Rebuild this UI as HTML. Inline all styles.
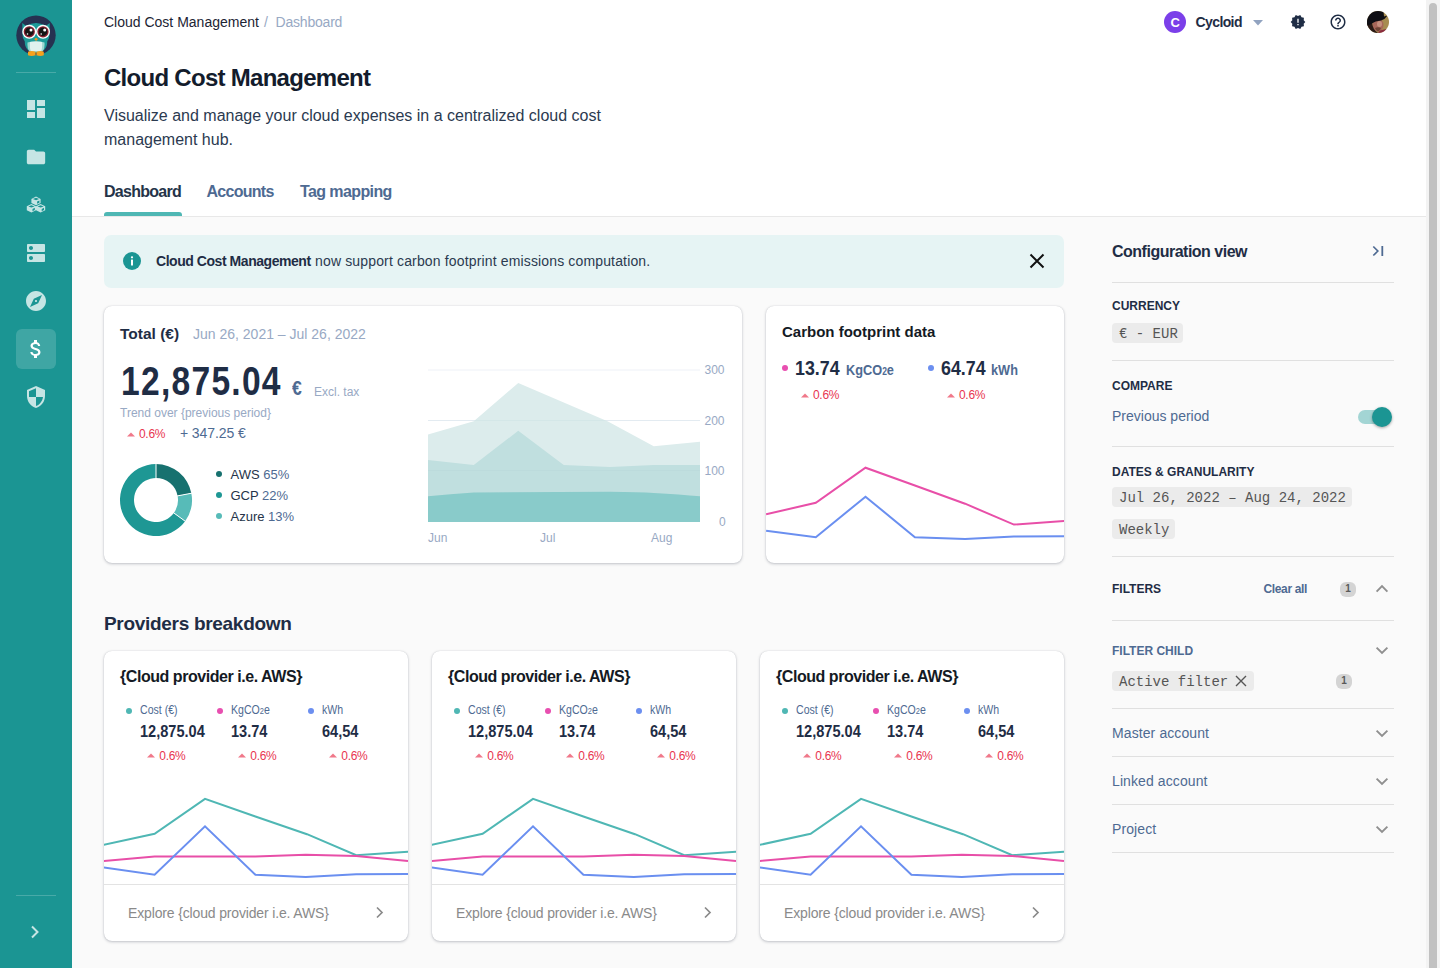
<!DOCTYPE html>
<html><head><meta charset="utf-8">
<style>
*{box-sizing:border-box;margin:0;padding:0}
html,body{width:1440px;height:968px;overflow:hidden;font-family:"Liberation Sans",sans-serif;background:#fafafa;color:#1f2d45}
.a{position:absolute}
.t{position:absolute;white-space:nowrap;line-height:1}
.card{position:absolute;background:#fff;border-radius:8px;box-shadow:0 1px 3px rgba(30,40,60,.25),0 0 1px rgba(30,40,60,.2)}
</style></head><body>
<div class="a" style="left:0px;top:0px;width:72px;height:968px;background:#1b9593"></div><svg class="a" style="left:16px;top:15px;" width="40" height="42" viewBox="0 0 40 42">
<circle cx="20" cy="20.3" r="19.7" fill="#263251"/>
<path d="M6.3 8 L10 10.8 Q20 5 30 10.8 L33.7 8 L33.6 19 Q33.5 24 31.2 26.5 Q31.5 36.5 20 38 Q8.5 36.5 8.8 26.5 Q6.5 24 6.4 19 Z" fill="#1d9c99"/>
<circle cx="13.3" cy="16.8" r="7" fill="#fff"/><circle cx="27" cy="16.8" r="7" fill="#fff"/>
<circle cx="13.3" cy="16.8" r="5.6" fill="#8a2130"/><circle cx="27" cy="16.8" r="5.6" fill="#8a2130"/>
<circle cx="13.3" cy="16.8" r="4.3" fill="#151515"/><circle cx="27" cy="16.8" r="4.3" fill="#151515"/>
<circle cx="15" cy="15" r="1.5" fill="#fff"/><circle cx="28.7" cy="15" r="1.5" fill="#fff"/>
<circle cx="11.5" cy="19" r="0.8" fill="#fff"/><circle cx="25.2" cy="19" r="0.8" fill="#fff"/>
<circle cx="20.1" cy="24.3" r="1.4" fill="#f7931e"/>
<path d="M11.5 27.5 Q20 25 28.5 27.5 Q29 33.5 26.5 36.5 L13.5 36.5 Q11 33.5 11.5 27.5Z" fill="#9fd8d2"/>
<path d="M14 27 Q20 25.8 26 27 Q26.5 33.5 25 36.5 L15 36.5 Q13.5 33.5 14 27Z" fill="#dff2ef"/>
<path d="M12 36.8 Q15.5 35 19.6 36.8 L19.6 40.3 Q15.5 41.5 12 40.3Z M20.4 36.8 Q24.5 35 27.8 36.8 L27.8 40.3 Q24.5 41.5 20.4 40.3Z" fill="#f7a11e"/>
</svg><div class="a" style="left:16px;top:72px;width:40px;height:1px;background:rgba(255,255,255,.2)"></div><svg class="a" style="left:24px;top:97px;" width="24" height="24" viewBox="0 0 24 24"><path fill="#c6e5e4" d="M3 13h8V3H3v10zm0 8h8v-6H3v6zm10 0h8V11h-8v10zm0-18v6h8V3h-8z"/></svg><svg class="a" style="left:25px;top:146px;" width="22" height="22" viewBox="0 0 24 24"><path fill="#c6e5e4" d="M10 4H4c-1.1 0-1.99.9-1.99 2L2 18c0 1.1.9 2 2 2h16c1.1 0 2-.9 2-2V8c0-1.1-.9-2-2-2h-8l-2-2z"/></svg><svg class="a" style="left:26px;top:196px;" width="20" height="17" viewBox="0 0 20 17"><path d="M10 0.6 L14.6 2.9 L14.6 6.8999999999999995 L10 9.2 L5.4 6.8999999999999995 L5.4 2.9Z" fill="#c6e5e4"/><path d="M10 1.7999999999999998 L13.1 3.0 L10 4.2 L6.9 3.0Z" fill="#1b9593"/><path d="M11.1 5.5 L13.4 4.3999999999999995 L13.4 6.699999999999999 L11.1 7.8Z" fill="#1b9593"/><path d="M5.4 8.0 L10.0 10.3 L10.0 14.3 L5.4 16.6 L0.8000000000000007 14.3 L0.8000000000000007 10.3Z" fill="#c6e5e4"/><path d="M5.4 9.2 L8.5 10.4 L5.4 11.6 L2.3000000000000003 10.4Z" fill="#1b9593"/><path d="M6.5 12.9 L8.8 11.8 L8.8 14.1 L6.5 15.2Z" fill="#1b9593"/><path d="M14.6 8.0 L19.2 10.3 L19.2 14.3 L14.6 16.6 L10.0 14.3 L10.0 10.3Z" fill="#c6e5e4"/><path d="M14.6 9.2 L17.7 10.4 L14.6 11.6 L11.5 10.4Z" fill="#1b9593"/><path d="M15.7 12.9 L18.0 11.8 L18.0 14.1 L15.7 15.2Z" fill="#1b9593"/></svg><svg class="a" style="left:24px;top:241px;" width="24" height="24" viewBox="0 0 24 24"><path fill="#c6e5e4" d="M20 13H4c-.55 0-1 .45-1 1v6c0 .55.45 1 1 1h16c.55 0 1-.45 1-1v-6c0-.55-.45-1-1-1zM7 19c-1.1 0-2-.9-2-2s.9-2 2-2 2 .9 2 2-.9 2-2 2zM20 3H4c-.55 0-1 .45-1 1v6c0 .55.45 1 1 1h16c.55 0 1-.45 1-1V4c0-.55-.45-1-1-1zM7 9c-1.1 0-2-.9-2-2s.9-2 2-2 2 .9 2 2-.9 2-2 2z"/></svg><svg class="a" style="left:24px;top:289px;" width="24" height="24" viewBox="0 0 24 24"><path fill="#c6e5e4" d="M12 10.9c-.61 0-1.1.49-1.1 1.1s.49 1.1 1.1 1.1c.61 0 1.1-.49 1.1-1.1s-.49-1.1-1.1-1.1zM12 2C6.48 2 2 6.48 2 12s4.48 10 10 10 10-4.48 10-10S17.52 2 12 2zm2.19 12.19L6 18l3.81-8.19L18 6l-3.81 8.19z"/></svg><div class="a" style="left:16px;top:329px;width:40px;height:40px;background:rgba(255,255,255,.16);border-radius:6px"></div><svg class="a" style="left:23.5px;top:337px;" width="24" height="24" viewBox="0 0 24 24"><path fill="#fff" d="M11.8 10.9c-2.27-.59-3-1.2-3-2.15 0-1.09 1.01-1.85 2.7-1.85 1.78 0 2.44.85 2.5 2.1h2.21c-.07-1.72-1.12-3.3-3.21-3.81V3h-3v2.16c-1.94.42-3.5 1.68-3.5 3.61 0 2.31 1.91 3.46 4.7 4.13 2.5.6 3 1.48 3 2.41 0 .69-.49 1.79-2.7 1.79-2.06 0-2.87-.92-2.98-2.1h-2.2c.12 2.19 1.76 3.42 3.68 3.83V21h3v-2.15c1.95-.37 3.5-1.5 3.5-3.55 0-2.84-2.43-3.81-4.7-4.4z"/></svg><svg class="a" style="left:24px;top:385px;" width="24" height="24" viewBox="0 0 24 24"><path fill="#c6e5e4" d="M12 1L3 5v6c0 5.55 3.84 10.74 9 12 5.16-1.26 9-6.45 9-12V5l-9-4zm0 10.99h7c-.53 4.12-3.28 7.79-7 8.94V12H5V6.3l7-3.11v8.8z"/></svg><div class="a" style="left:16px;top:895px;width:40px;height:1px;background:rgba(255,255,255,.2)"></div><svg class="a" style="left:29px;top:925px;" width="14" height="14" viewBox="0 0 14 14"><path d="M3 1.5 L8.5 7 L3 12.5" fill="none" stroke="#c6e5e4" stroke-width="2"/></svg><div class="a" style="left:72px;top:0px;width:1354px;height:216px;background:#fff"></div><div class="a" style="left:72px;top:216px;width:1354px;height:1px;background:#e8e8e8"></div><div class="t" style="left:104px;top:15.00px;font-size:14px;font-weight:normal;color:#1c2434;font-family:'Liberation Sans';">Cloud Cost Management</div><div class="t" style="left:264px;top:15.00px;font-size:14px;font-weight:normal;color:#98a9c4;font-family:'Liberation Sans';">/</div><div class="t" style="left:275.5px;top:15.00px;font-size:14px;font-weight:normal;color:#98a9c4;letter-spacing:-0.2px;font-family:'Liberation Sans';">Dashboard</div><div class="t" style="left:104px;top:66.00px;font-size:24px;font-weight:bold;color:#131c2c;letter-spacing:-0.72px;font-family:'Liberation Sans';">Cloud Cost Management</div><div class="t" style="left:104px;top:108.00px;font-size:16px;font-weight:normal;color:#2b3a50;font-family:'Liberation Sans';">Visualize and manage your cloud expenses in a centralized cloud cost</div><div class="t" style="left:104px;top:132.00px;font-size:16px;font-weight:normal;color:#2b3a50;font-family:'Liberation Sans';">management hub.</div><div class="t" style="left:104px;top:184.00px;font-size:16px;font-weight:bold;color:#253449;letter-spacing:-0.72px;font-family:'Liberation Sans';">Dashboard</div><div class="t" style="left:206.5px;top:184.00px;font-size:16px;font-weight:bold;color:#4e6a92;letter-spacing:-0.72px;font-family:'Liberation Sans';">Accounts</div><div class="t" style="left:300px;top:184.00px;font-size:16px;font-weight:bold;color:#4e6a92;letter-spacing:-0.6px;font-family:'Liberation Sans';">Tag mapping</div><div class="a" style="left:104px;top:212px;width:78px;height:4px;background:#4fb7b4;border-radius:3px 3px 0 0"></div><div class="a" style="left:1164px;top:11px;width:22px;height:22px;background:#7b3fe9;border-radius:50%"></div><div class="t" style="left:1170.5px;top:16.00px;font-size:13px;font-weight:bold;color:#fff;font-family:'Liberation Sans';">C</div><div class="t" style="left:1195.5px;top:15.00px;font-size:14px;font-weight:bold;color:#1f2d45;letter-spacing:-0.6px;font-family:'Liberation Sans';">Cycloid</div><svg class="a" style="left:1253px;top:19.5px;" width="10" height="6" viewBox="0 0 10 6"><path d="M0 0 H10 L5 5.5Z" fill="#91a3c0"/></svg><svg class="a" style="left:1290px;top:14px;" width="16" height="16" viewBox="0 0 24 24"><path fill="#1f2d45" d="M23 12l-2.44-2.78.34-3.68-3.61-.82-1.89-3.18L12 3 8.6 1.54 6.71 4.72l-3.61.81.34 3.68L1 12l2.44 2.78-.34 3.69 3.61.82 1.89 3.18L12 21l3.4 1.46 1.89-3.18 3.61-.82-.34-3.68L23 12zm-10 5h-2v-2h2v2zm0-4h-2V7h2v6z"/></svg><svg class="a" style="left:1328.8px;top:13.2px;" width="18" height="18" viewBox="0 0 24 24"><path fill="#1f2d45" d="M11 18h2v-2h-2v2zm1-16C6.48 2 2 6.48 2 12s4.48 10 10 10 10-4.48 10-10S17.52 2 12 2zm0 18c-4.41 0-8-3.59-8-8s3.59-8 8-8 8 3.59 8 8-3.59 8-8 8zm0-14c-2.21 0-4 1.79-4 4h2c0-1.1.9-2 2-2s2 .9 2 2c0 2-3 1.75-3 5h2c0-2.25 3-2.5 3-5 0-2.21-1.79-4-4-4z"/></svg><svg class="a" style="left:1367px;top:11px;" width="22" height="22" viewBox="0 0 22 22"><defs><clipPath id="av"><circle cx="11" cy="11" r="11"/></clipPath></defs>
<g clip-path="url(#av)"><rect width="22" height="22" fill="#a78c50"/>
<ellipse cx="11" cy="14" rx="5.5" ry="6.5" fill="#a8675a"/><ellipse cx="12.5" cy="13" rx="2.5" ry="3" fill="#c58f7e"/>
<path d="M0 12 Q3 11 5 12 Q6 19 11 22 L0 22Z" fill="#2a1a16"/>
<path d="M8 17 Q11 15.5 14 17 Q13 20 11 20.5 Q9 20 8 17Z" fill="#6e4435"/>
<path d="M11 22 L13 19.5 Q17 18.5 22 17.5 L22 22Z" fill="#8a2a3e"/>
<path d="M0 0 H16.5 L17 5.5 L20.5 4.5 Q18.5 8 14 9.5 Q8 10 5 12.5 L0 15Z" fill="#0e0e14"/></g></svg><div class="a" style="left:1426px;top:0px;width:14px;height:968px;background:#f3f3f3"></div><div class="a" style="left:1429px;top:3px;width:8px;height:990px;background:#c1c1c1;border-radius:4px"></div><div class="a" style="left:104px;top:235px;width:960px;height:53px;background:#e6f4f4;border-radius:7px"></div><svg class="a" style="left:123px;top:252px;" width="18" height="18" viewBox="0 0 18 18"><circle cx="9" cy="9" r="9" fill="#1b9593"/><rect x="8" y="7.6" width="2" height="6" rx=".3" fill="#fff"/><circle cx="9" cy="5.3" r="1.15" fill="#fff"/></svg><div class="t" style="left:156px;top:254.00px;font-size:14px;font-weight:bold;color:#1f2d45;letter-spacing:-0.45px;font-family:'Liberation Sans';">Cloud Cost Management</div><div class="t" style="left:311px;top:254.00px;font-size:14px;font-weight:normal;color:#2b3a50;letter-spacing:0.15px;font-family:'Liberation Sans';">&nbsp;now support carbon footprint emissions computation.</div><svg class="a" style="left:1029px;top:253px;" width="16" height="16" viewBox="0 0 16 16"><path d="M1.5 1.5 L14.5 14.5 M14.5 1.5 L1.5 14.5" stroke="#111" stroke-width="2"/></svg><div class="card" style="left:104px;top:306px;width:638px;height:257px"></div><div class="t" style="left:120px;top:326.00px;font-size:15.5px;font-weight:bold;color:#1f2d45;font-family:'Liberation Sans';">Total (€)</div><div class="t" style="left:193px;top:327.00px;font-size:14px;font-weight:normal;color:#98a9c4;font-family:'Liberation Sans';">Jun 26, 2021 – Jul 26, 2022</div><div class="t" style="left:121px;top:361.00px;font-size:40px;font-weight:bold;color:#1f2d45;letter-spacing:1.5px;transform:scaleX(0.84);transform-origin:0 0;font-family:'Liberation Sans';">12,875.04</div><div class="t" style="left:292px;top:378.00px;font-size:20px;font-weight:bold;color:#4e6a92;transform:scaleX(0.88);transform-origin:0 0;font-family:'Liberation Sans';">€</div><div class="t" style="left:314px;top:386.00px;font-size:12px;font-weight:normal;color:#98a9c4;font-family:'Liberation Sans';">Excl. tax</div><div class="t" style="left:120px;top:407.00px;font-size:12px;font-weight:normal;color:#98a9c4;font-family:'Liberation Sans';">Trend over {previous period}</div><svg class="a" style="left:127px;top:431.5px;" width="8" height="5" viewBox="0 0 8 5"><path d="M0 4.5 L4 0.5 L8 4.5Z" fill="#f0788a"/></svg><div class="t" style="left:139px;top:428.00px;font-size:12px;font-weight:normal;color:#e8354f;letter-spacing:-0.3px;font-family:'Liberation Sans';">0.6%</div><div class="t" style="left:180px;top:426.00px;font-size:14px;font-weight:normal;color:#4e6a92;letter-spacing:-0.1px;font-family:'Liberation Sans';">+ 347.25 €</div><svg class="a" style="left:104px;top:440px;" width="110" height="120" viewBox="0 0 110 120"><path d="M52.00 24.00 A36 36 0 0 1 87.36 53.25 L73.61 55.88 A22 22 0 0 0 52.00 38.00Z" fill="#17716f"/><path d="M87.36 53.25 A36 36 0 0 1 81.12 81.16 L69.80 72.93 A22 22 0 0 0 73.61 55.88Z" fill="#57bbb8"/><path d="M81.12 81.16 A36 36 0 1 1 52.00 24.00 L52.00 38.00 A22 22 0 1 0 69.80 72.93Z" fill="#1e9794"/><line x1="52.00" y1="39.00" x2="52.00" y2="23.00" stroke="#fff" stroke-width="1"/><line x1="72.63" y1="56.06" x2="88.34" y2="53.07" stroke="#fff" stroke-width="1"/><line x1="68.99" y1="72.34" x2="81.93" y2="81.75" stroke="#fff" stroke-width="1"/></svg><div class="a" style="left:216px;top:471.4px;width:6px;height:6px;background:#17716f;border-radius:50%"></div><div class="t" style="left:230.5px;top:468.00px;font-size:13px;font-weight:normal;color:#253449;font-family:'Liberation Sans';">AWS <span style="color:#4e6a92">65%</span></div><div class="a" style="left:216px;top:492.4px;width:6px;height:6px;background:#1e9794;border-radius:50%"></div><div class="t" style="left:230.5px;top:489.00px;font-size:13px;font-weight:normal;color:#253449;font-family:'Liberation Sans';">GCP <span style="color:#4e6a92">22%</span></div><div class="a" style="left:216px;top:513.4px;width:6px;height:6px;background:#57bbb8;border-radius:50%"></div><div class="t" style="left:230.5px;top:510.00px;font-size:13px;font-weight:normal;color:#253449;font-family:'Liberation Sans';">Azure <span style="color:#4e6a92">13%</span></div><svg class="a" style="left:428px;top:360px;" width="300" height="190" viewBox="428 360 300 190">
<line x1="428" y1="370" x2="700" y2="370" stroke="#eef1f7" stroke-width="1"/>
<line x1="428" y1="420.5" x2="700" y2="420.5" stroke="#eef1f7" stroke-width="1"/>
<path d="M428 434.5 L473.75 421.25 L518.25 383 L607.5 421.25 L653.75 446.25 L700 441.75 L700 522 L428 522Z" fill="#dcecec"/>
<path d="M428 460 L473.75 465 L518.25 430.75 L563.75 465 L610 467 L653.75 465 L700 465 L700 522 L428 522Z" fill="#c0dfdf"/>
<path d="M428 496.25 Q450 494 473.75 492.5 L610 491.75 Q640 492 653.75 493 Q680 494.5 700 496.25 L700 522 L428 522Z" fill="#89cbca"/>
<line x1="428" y1="470.5" x2="700" y2="470.5" stroke="#b3d3d6" stroke-width="0.6" opacity=".5"/>
<line x1="428" y1="420.5" x2="700" y2="420.5" stroke="#b3d3d6" stroke-width="0.6" opacity=".3"/>
</svg><div class="t" style="left:704.5px;top:364.00px;font-size:12px;font-weight:normal;color:#98a9c4;font-family:'Liberation Sans';">300</div><div class="t" style="left:704.5px;top:415.00px;font-size:12px;font-weight:normal;color:#98a9c4;font-family:'Liberation Sans';">200</div><div class="t" style="left:704.5px;top:465.00px;font-size:12px;font-weight:normal;color:#98a9c4;font-family:'Liberation Sans';">100</div><div class="t" style="left:719px;top:516.00px;font-size:12px;font-weight:normal;color:#98a9c4;font-family:'Liberation Sans';">0</div><div class="t" style="left:428px;top:532.00px;font-size:12px;font-weight:normal;color:#98a9c4;font-family:'Liberation Sans';">Jun</div><div class="t" style="left:540px;top:532.00px;font-size:12px;font-weight:normal;color:#98a9c4;font-family:'Liberation Sans';">Jul</div><div class="t" style="left:651px;top:532.00px;font-size:12px;font-weight:normal;color:#98a9c4;font-family:'Liberation Sans';">Aug</div><div class="card" style="left:766px;top:306px;width:298px;height:257px"></div><div class="t" style="left:782px;top:324.00px;font-size:15px;font-weight:bold;color:#141a24;font-family:'Liberation Sans';">Carbon footprint data</div><div class="a" style="left:782px;top:365px;width:6px;height:6px;background:#e84fb0;border-radius:50%"></div><div class="t" style="left:795px;top:358.00px;font-size:20px;font-weight:bold;color:#1f2d45;transform:scaleX(0.89);transform-origin:0 0;font-family:'Liberation Sans';">13.74</div><div class="t" style="left:845.5px;top:362.00px;font-size:15px;font-weight:bold;color:#4e6a92;transform:scaleX(0.85);transform-origin:0 0;font-family:'Liberation Sans';">KgCO<span style="font-size:10px">2</span>e</div><div class="a" style="left:928px;top:365px;width:6px;height:6px;background:#6c8ff0;border-radius:50%"></div><div class="t" style="left:940.5px;top:358.00px;font-size:20px;font-weight:bold;color:#1f2d45;transform:scaleX(0.89);transform-origin:0 0;font-family:'Liberation Sans';">64.74</div><div class="t" style="left:991px;top:362.00px;font-size:15px;font-weight:bold;color:#4e6a92;transform:scaleX(0.85);transform-origin:0 0;font-family:'Liberation Sans';">kWh</div><svg class="a" style="left:801px;top:392.7px;" width="8" height="5" viewBox="0 0 8 5"><path d="M0 4.5 L4 0.5 L8 4.5Z" fill="#f0788a"/></svg><div class="t" style="left:813px;top:389.00px;font-size:12px;font-weight:normal;color:#e8354f;letter-spacing:-0.3px;font-family:'Liberation Sans';">0.6%</div><svg class="a" style="left:947px;top:392.7px;" width="8" height="5" viewBox="0 0 8 5"><path d="M0 4.5 L4 0.5 L8 4.5Z" fill="#f0788a"/></svg><div class="t" style="left:959px;top:389.00px;font-size:12px;font-weight:normal;color:#e8354f;letter-spacing:-0.3px;font-family:'Liberation Sans';">0.6%</div><svg class="a" style="left:766px;top:440px;" width="298" height="123" viewBox="766 440 298 123">
<polyline points="766.1,514.3 815.8,502.8 865.5,467.7 914.9,485.5 965.1,503.7 1013.9,524.6 1064.1,521" fill="none" stroke="#e84fa8" stroke-width="2"/>
<polyline points="766.1,530.7 815.8,537.2 865.5,496.7 914.9,537.2 965.1,539.1 1013.9,536.6 1064.1,536.3" fill="none" stroke="#6a8ff0" stroke-width="2"/>
</svg><div class="t" style="left:104px;top:614.00px;font-size:19px;font-weight:bold;color:#1f2d45;letter-spacing:-0.3px;font-family:'Liberation Sans';">Providers breakdown</div><div class="card" style="left:104px;top:651px;width:304px;height:290px;overflow:hidden"></div><div class="t" style="left:120px;top:669.00px;font-size:16px;font-weight:bold;color:#141a24;letter-spacing:-0.45px;font-family:'Liberation Sans';">{Cloud provider i.e. AWS}</div><div class="a" style="left:125.89999999999999px;top:708.2px;width:6px;height:6px;background:#4fb7b4;border-radius:50%"></div><div class="t" style="left:140.1px;top:704.00px;font-size:12px;font-weight:normal;color:#4e6a92;transform:scaleX(0.88);transform-origin:0 0;font-family:'Liberation Sans';">Cost (€)</div><div class="t" style="left:140.1px;top:724.00px;font-size:16px;font-weight:bold;color:#1f2d45;transform:scaleX(0.91);transform-origin:0 0;font-family:'Liberation Sans';">12,875.04</div><svg class="a" style="left:147.29999999999998px;top:753.2px;" width="8" height="5" viewBox="0 0 8 5"><path d="M0 4.5 L4 0.5 L8 4.5Z" fill="#f0788a"/></svg><div class="t" style="left:159.29999999999998px;top:750.00px;font-size:12px;font-weight:normal;color:#e8354f;letter-spacing:-0.3px;font-family:'Liberation Sans';">0.6%</div><div class="a" style="left:216.9px;top:708.2px;width:6px;height:6px;background:#e84fb0;border-radius:50%"></div><div class="t" style="left:231.1px;top:704.00px;font-size:12px;font-weight:normal;color:#4e6a92;transform:scaleX(0.88);transform-origin:0 0;font-family:'Liberation Sans';">KgCO<span style="font-size:8.5px">2</span>e</div><div class="t" style="left:231.1px;top:724.00px;font-size:16px;font-weight:bold;color:#1f2d45;transform:scaleX(0.91);transform-origin:0 0;font-family:'Liberation Sans';">13.74</div><svg class="a" style="left:238.29999999999998px;top:753.2px;" width="8" height="5" viewBox="0 0 8 5"><path d="M0 4.5 L4 0.5 L8 4.5Z" fill="#f0788a"/></svg><div class="t" style="left:250.29999999999998px;top:750.00px;font-size:12px;font-weight:normal;color:#e8354f;letter-spacing:-0.3px;font-family:'Liberation Sans';">0.6%</div><div class="a" style="left:307.90000000000003px;top:708.2px;width:6px;height:6px;background:#6c8ff0;border-radius:50%"></div><div class="t" style="left:322.1px;top:704.00px;font-size:12px;font-weight:normal;color:#4e6a92;transform:scaleX(0.88);transform-origin:0 0;font-family:'Liberation Sans';">kWh</div><div class="t" style="left:322.1px;top:724.00px;font-size:16px;font-weight:bold;color:#1f2d45;transform:scaleX(0.91);transform-origin:0 0;font-family:'Liberation Sans';">64,54</div><svg class="a" style="left:329.3px;top:753.2px;" width="8" height="5" viewBox="0 0 8 5"><path d="M0 4.5 L4 0.5 L8 4.5Z" fill="#f0788a"/></svg><div class="t" style="left:341.3px;top:750.00px;font-size:12px;font-weight:normal;color:#e8354f;letter-spacing:-0.3px;font-family:'Liberation Sans';">0.6%</div><svg class="a" style="left:104px;top:780px;" width="304" height="104" viewBox="104 780 304 104">
<polyline points="103.7,844.9 154.6,833.7 205,798.9 255.4,816.5 307,834.2 356.2,855.2 408,851.8" fill="none" stroke="#4fb7b4" stroke-width="2"/>
<polyline points="103.7,861 154.6,856.4 255.4,856.4 305.8,854.8 356.2,856 408,861" fill="none" stroke="#e84fa8" stroke-width="2"/>
<polyline points="103.7,867.4 154.6,874.7 205,826.4 255.4,874.7 305.8,877 356.2,874.3 408,874" fill="none" stroke="#6a8ff0" stroke-width="2"/>
</svg><div class="a" style="left:104px;top:884px;width:304px;height:1px;background:#e3e3e3"></div><div class="t" style="left:128px;top:906.00px;font-size:14px;font-weight:normal;color:#8a8a8a;letter-spacing:-0.15px;font-family:'Liberation Sans';">Explore {cloud provider i.e. AWS}</div><svg class="a" style="left:375px;top:906px;" width="10" height="13" viewBox="0 0 10 13"><path d="M2 1.5 L7 6.5 L2 11.5" fill="none" stroke="#8a8a8a" stroke-width="1.7"/></svg><div class="card" style="left:432px;top:651px;width:304px;height:290px;overflow:hidden"></div><div class="t" style="left:448px;top:669.00px;font-size:16px;font-weight:bold;color:#141a24;letter-spacing:-0.45px;font-family:'Liberation Sans';">{Cloud provider i.e. AWS}</div><div class="a" style="left:453.90000000000003px;top:708.2px;width:6px;height:6px;background:#4fb7b4;border-radius:50%"></div><div class="t" style="left:468.1px;top:704.00px;font-size:12px;font-weight:normal;color:#4e6a92;transform:scaleX(0.88);transform-origin:0 0;font-family:'Liberation Sans';">Cost (€)</div><div class="t" style="left:468.1px;top:724.00px;font-size:16px;font-weight:bold;color:#1f2d45;transform:scaleX(0.91);transform-origin:0 0;font-family:'Liberation Sans';">12,875.04</div><svg class="a" style="left:475.3px;top:753.2px;" width="8" height="5" viewBox="0 0 8 5"><path d="M0 4.5 L4 0.5 L8 4.5Z" fill="#f0788a"/></svg><div class="t" style="left:487.3px;top:750.00px;font-size:12px;font-weight:normal;color:#e8354f;letter-spacing:-0.3px;font-family:'Liberation Sans';">0.6%</div><div class="a" style="left:544.9px;top:708.2px;width:6px;height:6px;background:#e84fb0;border-radius:50%"></div><div class="t" style="left:559.1px;top:704.00px;font-size:12px;font-weight:normal;color:#4e6a92;transform:scaleX(0.88);transform-origin:0 0;font-family:'Liberation Sans';">KgCO<span style="font-size:8.5px">2</span>e</div><div class="t" style="left:559.1px;top:724.00px;font-size:16px;font-weight:bold;color:#1f2d45;transform:scaleX(0.91);transform-origin:0 0;font-family:'Liberation Sans';">13.74</div><svg class="a" style="left:566.3000000000001px;top:753.2px;" width="8" height="5" viewBox="0 0 8 5"><path d="M0 4.5 L4 0.5 L8 4.5Z" fill="#f0788a"/></svg><div class="t" style="left:578.3000000000001px;top:750.00px;font-size:12px;font-weight:normal;color:#e8354f;letter-spacing:-0.3px;font-family:'Liberation Sans';">0.6%</div><div class="a" style="left:635.9px;top:708.2px;width:6px;height:6px;background:#6c8ff0;border-radius:50%"></div><div class="t" style="left:650.1px;top:704.00px;font-size:12px;font-weight:normal;color:#4e6a92;transform:scaleX(0.88);transform-origin:0 0;font-family:'Liberation Sans';">kWh</div><div class="t" style="left:650.1px;top:724.00px;font-size:16px;font-weight:bold;color:#1f2d45;transform:scaleX(0.91);transform-origin:0 0;font-family:'Liberation Sans';">64,54</div><svg class="a" style="left:657.3000000000001px;top:753.2px;" width="8" height="5" viewBox="0 0 8 5"><path d="M0 4.5 L4 0.5 L8 4.5Z" fill="#f0788a"/></svg><div class="t" style="left:669.3000000000001px;top:750.00px;font-size:12px;font-weight:normal;color:#e8354f;letter-spacing:-0.3px;font-family:'Liberation Sans';">0.6%</div><svg class="a" style="left:432px;top:780px;" width="304" height="104" viewBox="432 780 304 104">
<polyline points="431.7,844.9 482.6,833.7 533,798.9 583.4,816.5 635,834.2 684.2,855.2 736,851.8" fill="none" stroke="#4fb7b4" stroke-width="2"/>
<polyline points="431.7,861 482.6,856.4 583.4,856.4 633.8,854.8 684.2,856 736,861" fill="none" stroke="#e84fa8" stroke-width="2"/>
<polyline points="431.7,867.4 482.6,874.7 533,826.4 583.4,874.7 633.8,877 684.2,874.3 736,874" fill="none" stroke="#6a8ff0" stroke-width="2"/>
</svg><div class="a" style="left:432px;top:884px;width:304px;height:1px;background:#e3e3e3"></div><div class="t" style="left:456px;top:906.00px;font-size:14px;font-weight:normal;color:#8a8a8a;letter-spacing:-0.15px;font-family:'Liberation Sans';">Explore {cloud provider i.e. AWS}</div><svg class="a" style="left:703px;top:906px;" width="10" height="13" viewBox="0 0 10 13"><path d="M2 1.5 L7 6.5 L2 11.5" fill="none" stroke="#8a8a8a" stroke-width="1.7"/></svg><div class="card" style="left:760px;top:651px;width:304px;height:290px;overflow:hidden"></div><div class="t" style="left:776px;top:669.00px;font-size:16px;font-weight:bold;color:#141a24;letter-spacing:-0.45px;font-family:'Liberation Sans';">{Cloud provider i.e. AWS}</div><div class="a" style="left:781.9px;top:708.2px;width:6px;height:6px;background:#4fb7b4;border-radius:50%"></div><div class="t" style="left:796.1px;top:704.00px;font-size:12px;font-weight:normal;color:#4e6a92;transform:scaleX(0.88);transform-origin:0 0;font-family:'Liberation Sans';">Cost (€)</div><div class="t" style="left:796.1px;top:724.00px;font-size:16px;font-weight:bold;color:#1f2d45;transform:scaleX(0.91);transform-origin:0 0;font-family:'Liberation Sans';">12,875.04</div><svg class="a" style="left:803.3000000000001px;top:753.2px;" width="8" height="5" viewBox="0 0 8 5"><path d="M0 4.5 L4 0.5 L8 4.5Z" fill="#f0788a"/></svg><div class="t" style="left:815.3000000000001px;top:750.00px;font-size:12px;font-weight:normal;color:#e8354f;letter-spacing:-0.3px;font-family:'Liberation Sans';">0.6%</div><div class="a" style="left:872.9px;top:708.2px;width:6px;height:6px;background:#e84fb0;border-radius:50%"></div><div class="t" style="left:887.1px;top:704.00px;font-size:12px;font-weight:normal;color:#4e6a92;transform:scaleX(0.88);transform-origin:0 0;font-family:'Liberation Sans';">KgCO<span style="font-size:8.5px">2</span>e</div><div class="t" style="left:887.1px;top:724.00px;font-size:16px;font-weight:bold;color:#1f2d45;transform:scaleX(0.91);transform-origin:0 0;font-family:'Liberation Sans';">13.74</div><svg class="a" style="left:894.3000000000001px;top:753.2px;" width="8" height="5" viewBox="0 0 8 5"><path d="M0 4.5 L4 0.5 L8 4.5Z" fill="#f0788a"/></svg><div class="t" style="left:906.3000000000001px;top:750.00px;font-size:12px;font-weight:normal;color:#e8354f;letter-spacing:-0.3px;font-family:'Liberation Sans';">0.6%</div><div class="a" style="left:963.9px;top:708.2px;width:6px;height:6px;background:#6c8ff0;border-radius:50%"></div><div class="t" style="left:978.1px;top:704.00px;font-size:12px;font-weight:normal;color:#4e6a92;transform:scaleX(0.88);transform-origin:0 0;font-family:'Liberation Sans';">kWh</div><div class="t" style="left:978.1px;top:724.00px;font-size:16px;font-weight:bold;color:#1f2d45;transform:scaleX(0.91);transform-origin:0 0;font-family:'Liberation Sans';">64,54</div><svg class="a" style="left:985.3000000000001px;top:753.2px;" width="8" height="5" viewBox="0 0 8 5"><path d="M0 4.5 L4 0.5 L8 4.5Z" fill="#f0788a"/></svg><div class="t" style="left:997.3000000000001px;top:750.00px;font-size:12px;font-weight:normal;color:#e8354f;letter-spacing:-0.3px;font-family:'Liberation Sans';">0.6%</div><svg class="a" style="left:760px;top:780px;" width="304" height="104" viewBox="760 780 304 104">
<polyline points="759.7,844.9 810.6,833.7 861,798.9 911.4,816.5 963,834.2 1012.2,855.2 1064,851.8" fill="none" stroke="#4fb7b4" stroke-width="2"/>
<polyline points="759.7,861 810.6,856.4 911.4,856.4 961.8,854.8 1012.2,856 1064,861" fill="none" stroke="#e84fa8" stroke-width="2"/>
<polyline points="759.7,867.4 810.6,874.7 861,826.4 911.4,874.7 961.8,877 1012.2,874.3 1064,874" fill="none" stroke="#6a8ff0" stroke-width="2"/>
</svg><div class="a" style="left:760px;top:884px;width:304px;height:1px;background:#e3e3e3"></div><div class="t" style="left:784px;top:906.00px;font-size:14px;font-weight:normal;color:#8a8a8a;letter-spacing:-0.15px;font-family:'Liberation Sans';">Explore {cloud provider i.e. AWS}</div><svg class="a" style="left:1031px;top:906px;" width="10" height="13" viewBox="0 0 10 13"><path d="M2 1.5 L7 6.5 L2 11.5" fill="none" stroke="#8a8a8a" stroke-width="1.7"/></svg><div class="t" style="left:1112px;top:244.00px;font-size:16px;font-weight:bold;color:#1f2d45;letter-spacing:-0.5px;font-family:'Liberation Sans';">Configuration view</div><svg class="a" style="left:1370px;top:245px;" width="16" height="12" viewBox="0 0 16 12"><path d="M3.3 1.5 L7.8 6 L3.3 10.5" fill="none" stroke="#4e6a92" stroke-width="1.7"/><rect x="11.4" y="1" width="1.8" height="10" fill="#4e6a92"/></svg><div class="a" style="left:1112px;top:282px;width:282px;height:1px;background:#e0e0e0"></div><div class="t" style="left:1112px;top:300.00px;font-size:12px;font-weight:bold;color:#1f2d45;font-family:'Liberation Sans';">CURRENCY</div><div class="a" style="left:1112px;top:323px;width:71px;height:20px;background:#ebebeb;border-radius:4px"></div><div class="t" style="left:1119px;top:327.00px;font-size:14px;font-weight:normal;color:#555;font-family:'Liberation Mono';">€ - EUR</div><div class="a" style="left:1112px;top:360px;width:282px;height:1px;background:#e0e0e0"></div><div class="t" style="left:1112px;top:380.00px;font-size:12px;font-weight:bold;color:#1f2d45;font-family:'Liberation Sans';">COMPARE</div><div class="t" style="left:1112px;top:409.00px;font-size:14px;font-weight:normal;color:#4e6a92;font-family:'Liberation Sans';">Previous period</div><div class="a" style="left:1358px;top:410px;width:31px;height:14px;background:#a3d5d4;border-radius:7px"></div><div class="a" style="left:1372px;top:407px;width:20px;height:20px;background:#1b9593;border-radius:50%;box-shadow:0 1px 3px rgba(0,0,0,.35)"></div><div class="a" style="left:1112px;top:446px;width:282px;height:1px;background:#e0e0e0"></div><div class="t" style="left:1112px;top:466.00px;font-size:12px;font-weight:bold;color:#1f2d45;font-family:'Liberation Sans';">DATES &amp; GRANULARITY</div><div class="a" style="left:1112px;top:487px;width:240px;height:20px;background:#ebebeb;border-radius:4px"></div><div class="t" style="left:1119px;top:491.00px;font-size:14px;font-weight:normal;color:#555;font-family:'Liberation Mono';">Jul 26, 2022 – Aug 24, 2022</div><div class="a" style="left:1112px;top:519px;width:63px;height:20px;background:#ebebeb;border-radius:4px"></div><div class="t" style="left:1119px;top:523.00px;font-size:14px;font-weight:normal;color:#555;font-family:'Liberation Mono';">Weekly</div><div class="a" style="left:1112px;top:556px;width:282px;height:1px;background:#e0e0e0"></div><div class="t" style="left:1112px;top:583.00px;font-size:12px;font-weight:bold;color:#1f2d45;font-family:'Liberation Sans';">FILTERS</div><div class="t" style="left:1263.5px;top:583.00px;font-size:12px;font-weight:bold;color:#4e6a92;letter-spacing:-0.35px;font-family:'Liberation Sans';">Clear all</div><div class="a" style="left:1340px;top:581.5px;width:16px;height:15px;background:#d4d4d4;border-radius:6px"></div><div class="t" style="left:1345.2px;top:584.00px;font-size:10px;font-weight:bold;color:#5a5a5a;font-family:'Liberation Sans';">1</div><svg class="a" style="left:1374px;top:583px;" width="16" height="11" viewBox="0 0 16 11"><path d="M2.6 8.6 L8 3.2 L13.4 8.6" fill="none" stroke="#8f8f8f" stroke-width="1.9"/></svg><div class="a" style="left:1112px;top:620px;width:282px;height:1px;background:#e0e0e0"></div><div class="t" style="left:1112px;top:645.00px;font-size:12px;font-weight:bold;color:#4e6a92;font-family:'Liberation Sans';">FILTER CHILD</div><svg class="a" style="left:1374px;top:645px;" width="16" height="11" viewBox="0 0 16 11"><path d="M2.6 2.6 L8 8 L13.4 2.6" fill="none" stroke="#8f8f8f" stroke-width="1.9"/></svg><div class="a" style="left:1112px;top:671px;width:142px;height:20px;background:#ebebeb;border-radius:4px"></div><div class="t" style="left:1119px;top:675.00px;font-size:14px;font-weight:normal;color:#555;font-family:'Liberation Mono';">Active filter</div><svg class="a" style="left:1234px;top:674px;" width="14" height="14" viewBox="0 0 14 14"><path d="M2 2 L12 12 M12 2 L2 12" stroke="#555" stroke-width="1.4"/></svg><div class="a" style="left:1336px;top:673.5px;width:16px;height:15px;background:#d4d4d4;border-radius:6px"></div><div class="t" style="left:1341.2px;top:676.00px;font-size:10px;font-weight:bold;color:#5a5a5a;font-family:'Liberation Sans';">1</div><div class="a" style="left:1112px;top:708px;width:282px;height:1px;background:#e0e0e0"></div><div class="t" style="left:1112px;top:726.00px;font-size:14px;font-weight:normal;color:#4e6a92;letter-spacing:0.1px;font-family:'Liberation Sans';">Master account</div><svg class="a" style="left:1374px;top:728px;" width="16" height="11" viewBox="0 0 16 11"><path d="M2.6 2.6 L8 8 L13.4 2.6" fill="none" stroke="#8f8f8f" stroke-width="1.9"/></svg><div class="a" style="left:1112px;top:756px;width:282px;height:1px;background:#e0e0e0"></div><div class="t" style="left:1112px;top:774.00px;font-size:14px;font-weight:normal;color:#4e6a92;letter-spacing:0.1px;font-family:'Liberation Sans';">Linked account</div><svg class="a" style="left:1374px;top:776px;" width="16" height="11" viewBox="0 0 16 11"><path d="M2.6 2.6 L8 8 L13.4 2.6" fill="none" stroke="#8f8f8f" stroke-width="1.9"/></svg><div class="a" style="left:1112px;top:804px;width:282px;height:1px;background:#e0e0e0"></div><div class="t" style="left:1112px;top:822.00px;font-size:14px;font-weight:normal;color:#4e6a92;letter-spacing:0.1px;font-family:'Liberation Sans';">Project</div><svg class="a" style="left:1374px;top:824px;" width="16" height="11" viewBox="0 0 16 11"><path d="M2.6 2.6 L8 8 L13.4 2.6" fill="none" stroke="#8f8f8f" stroke-width="1.9"/></svg><div class="a" style="left:1112px;top:852px;width:282px;height:1px;background:#e0e0e0"></div></body></html>
